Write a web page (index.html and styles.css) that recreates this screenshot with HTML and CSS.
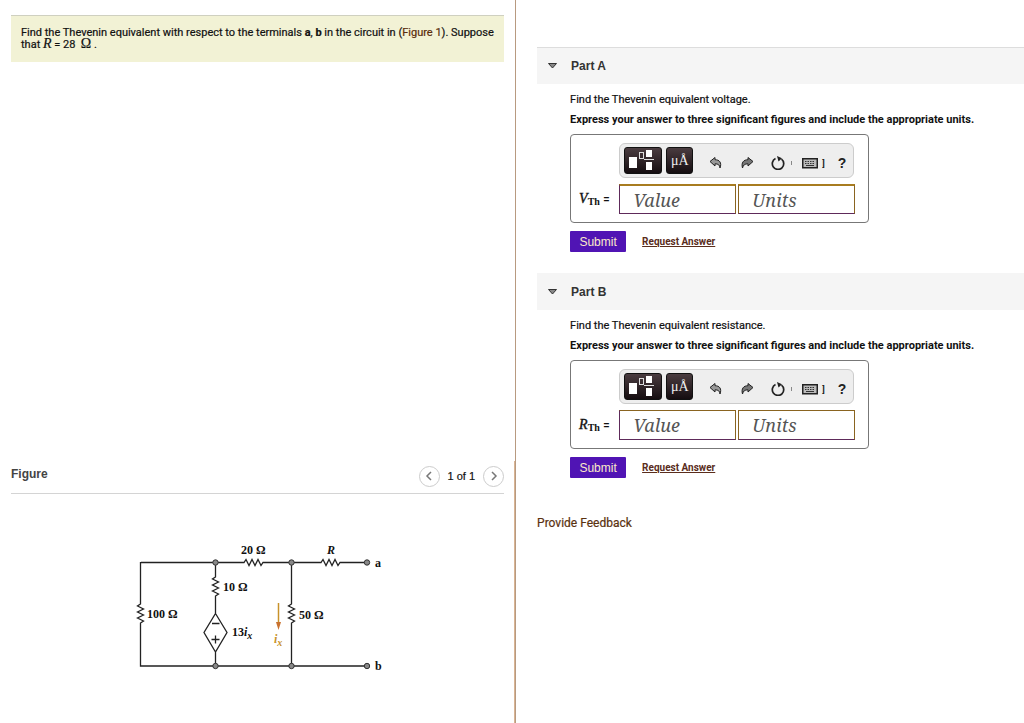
FILE: index.html
```html
<!DOCTYPE html>
<html lang="en">
<head>
    <meta charset="UTF-8">
    <meta name="viewport" content="width=device-width, initial-scale=1.0">
    <title>Thevenin Equivalent</title>
    <link rel="stylesheet" href="styles.css">
</head>
<body>
    <!-- shared toolbar icons -->
    <svg class="sprite" aria-hidden="true">
        <symbol id="icon-template" viewBox="0 0 38 27">
            <rect x="5" y="10" width="8" height="11" fill="#fff"/>
            <rect x="15.5" y="5.5" width="4" height="6" fill="none" stroke="#ddd"/>
            <rect x="22" y="3" width="6" height="7" fill="#fff"/>
            <path d="M20 12.5h10" stroke="#ddd"/>
            <rect x="22" y="15" width="6" height="8" fill="#fff"/>
        </symbol>
        <symbol id="icon-undo" viewBox="0 0 14 14">
            <path d="M1 5.500 6 1.500v2.200c4.500 0 7 3 5 8.300-.2-3-1.800-4.200-5-4.200V10z" fill="#999" stroke="#222"/>
        </symbol>
        <symbol id="icon-redo" viewBox="0 0 14 14">
            <path d="M13 5.500 8 1.500v2.200c-4.500 0-7 3-5.500 8.300.7-3 2.300-4.200 5.500-4.200V10z" fill="#777" stroke="#222"/>
        </symbol>
        <symbol id="icon-reset" viewBox="0 0 14 14">
            <path d="M4.500 2.600A5.700 5.700 0 1 0 10.500 3.200" fill="none" stroke="#222" stroke-width="1.700"/>
            <path d="M6 0l5 2.200L7.500 5.500z" fill="#222"/>
        </symbol>
        <symbol id="icon-keyboard" viewBox="0 0 16 11">
            <rect x=".75" y=".75" width="14.500" height="9" fill="#bbb" stroke="#222" stroke-width="1.500"/>
            <path d="M3 3.500h10M3 5.500h10" stroke="#333" stroke-dasharray="1.500 1"/>
            <path d="M4 7.500h8" stroke="#333"/>
        </symbol>
    </svg>

    <div class="page">
        <div class="left-pane">
            <div class="problem">
                Find the Thevenin equivalent with respect to the terminals <b>a</b>, <b>b</b> in the circuit in (<a href="#figure">Figure 1</a>). Suppose that <i class="math">R</i> = 28 &nbsp;<span class="math">Ω</span> .
            </div>

            <section class="figure" id="figure">
                <div class="figure-header">
                    <h2>Figure</h2>
                    <div class="pager">
                        <button type="button" aria-label="Previous">
                            <svg viewBox="0 0 10 10"><path d="M7 1 3 5l4 4"/></svg>
                        </button>
                        <span>1 of 1</span>
                        <button type="button" aria-label="Next">
                            <svg viewBox="0 0 10 10"><path d="M3 1l4 4-4 4"/></svg>
                        </button>
                    </div>
                </div>

                <svg class="circuit" viewBox="130 540 260 140">
                    <!-- wires and resistors -->
                    <g class="wire">
                        <path d="M141 562.500H244l2-3 3 6 3-6 3 6 3-6 3 6 2-3H321l2-3 3 6 3-6 3 6 3-6 3 6 2-3H365"/>
                        <path d="M140.500 562V604l-3 2 6 3-6 3 6 3-6 3 6 3-3 2V666H365"/>
                        <path d="M215.500 562V577l-3 2 6 3-6 3 6 3-6 3 6 3-3 2V613"/>
                        <path d="M215.500 613.500 227 632.500 215.500 652 204 632.500zM215.500 652V666M212 623.500h7.500M211.500 639.500h8M215.500 635.500v8"/>
                        <path d="M291.500 562V604l-3 2 6 3-6 3 6 3-6 3 6 3-3 2V666"/>
                    </g>
                    <g class="node">
                        <circle cx="215.500" cy="562.500" r="2.700"/>
                        <circle cx="291.500" cy="562.500" r="2.700"/>
                        <circle cx="367" cy="562.500" r="2.700"/>
                        <circle cx="215.500" cy="666" r="2.700"/>
                        <circle cx="291.500" cy="666" r="2.700"/>
                        <circle cx="367" cy="666" r="2.700"/>
                    </g>
                    <!-- current arrow -->
                    <path d="M278.500 603V623" stroke="#c8922a" stroke-width="1.500"/>
                    <path d="M276 622h5l-2.500 8z" fill="#c9722f"/>
                    <g class="label">
                        <text x="241" y="554">20 Ω</text>
                        <text x="327" y="554" font-style="italic">R</text>
                        <text x="375" y="567">a</text>
                        <text x="375" y="670">b</text>
                        <text x="223" y="591">10 Ω</text>
                        <text x="147" y="618">100 Ω</text>
                        <text x="299" y="619">50 Ω</text>
                        <text x="232" y="636">13<tspan font-style="italic">i</tspan><tspan class="sub" dy="3">x</tspan></text>
                        <text x="274" y="643" class="current">i<tspan class="sub" dy="3">x</tspan></text>
                    </g>
                </svg>
            </section>
        </div>

        <div class="right-pane">
            <section class="part">
                <h2 class="part-header"><svg viewBox="0 0 9 6"><path d="M.5.500h8l-4 4.500z"/></svg>Part A</h2>
                <div class="part-body">
                    <p>Find the Thevenin equivalent voltage.</p>
                    <p class="instructions">Express your answer to three significant figures and include the appropriate units.</p>
                    <form class="answer">
                        <div class="toolbar">
                            <button type="button" class="dark template" aria-label="Templates"><svg><use href="#icon-template"/></svg></button>
                            <button type="button" class="dark units">μÅ</button>
                            <button type="button" class="tool undo" aria-label="Undo"><svg><use href="#icon-undo"/></svg></button>
                            <button type="button" class="tool redo" aria-label="Redo"><svg><use href="#icon-redo"/></svg></button>
                            <button type="button" class="tool reset" aria-label="Reset"><svg><use href="#icon-reset"/></svg></button>
                            <span class="tick"></span>
                            <button type="button" class="tool keyboard" aria-label="Keyboard shortcuts"><svg><use href="#icon-keyboard"/></svg>]</button>
                            <button type="button" class="tool help">?</button>
                        </div>
                        <label for="value-a"><i>V</i><sub>Th</sub> <span>=</span></label>
                        <div class="fields">
                            <input type="text" id="value-a" placeholder="Value">
                            <input type="text" placeholder="Units" aria-label="Units">
                        </div>
                    </form>
                    <div class="actions">
                        <button type="button" class="submit">Submit</button>
                        <a href="#">Request Answer</a>
                    </div>
                </div>
            </section>

            <section class="part">
                <h2 class="part-header"><svg viewBox="0 0 9 6"><path d="M.5.500h8l-4 4.500z"/></svg>Part B</h2>
                <div class="part-body">
                    <p>Find the Thevenin equivalent resistance.</p>
                    <p class="instructions">Express your answer to three significant figures and include the appropriate units.</p>
                    <form class="answer">
                        <div class="toolbar">
                            <button type="button" class="dark template" aria-label="Templates"><svg><use href="#icon-template"/></svg></button>
                            <button type="button" class="dark units">μÅ</button>
                            <button type="button" class="tool undo" aria-label="Undo"><svg><use href="#icon-undo"/></svg></button>
                            <button type="button" class="tool redo" aria-label="Redo"><svg><use href="#icon-redo"/></svg></button>
                            <button type="button" class="tool reset" aria-label="Reset"><svg><use href="#icon-reset"/></svg></button>
                            <span class="tick"></span>
                            <button type="button" class="tool keyboard" aria-label="Keyboard shortcuts"><svg><use href="#icon-keyboard"/></svg>]</button>
                            <button type="button" class="tool help">?</button>
                        </div>
                        <label for="value-b"><i>R</i><sub>Th</sub> <span>=</span></label>
                        <div class="fields">
                            <input type="text" id="value-b" placeholder="Value">
                            <input type="text" placeholder="Units" aria-label="Units">
                        </div>
                    </form>
                    <div class="actions">
                        <button type="button" class="submit">Submit</button>
                        <a href="#">Request Answer</a>
                    </div>
                </div>
            </section>

            <a class="feedback" href="#">Provide Feedback</a>
        </div>
    </div>
</body>
</html>
```
FILE: styles.css
```css
* {
    box-sizing: border-box;
}

body {
    margin: 0;
    background: #fff;
    color: #111;
    font-family: Roboto, "Liberation Sans", Arial, sans-serif;
    font-size: 11px;
    line-height: 12px;
}

h2, p {
    margin: 0;
}

button {
    padding: 0;
    font-family: inherit;
    cursor: pointer;
}

.sprite {
    display: none;
}

.page {
    display: flex;
    min-height: 100vh;
}

/* left side: problem text and figure */
.left-pane {
    flex: 0 0 auto;
    width: 50.4%;
    display: flex;
    flex-direction: column;
    justify-content: space-between;
    padding: 15px 0 0 11px;
    border-right: 1px solid #b89a80;
}

.problem {
    margin-right: 11px;
    padding: 11px 10px;
    border-top: 1px solid #cfd0c0;
    background: #f2f2d5;
    -webkit-text-stroke: 0.2px;
}

.problem a {
    color: #5a2d0c;
    text-decoration: none;
}

.math {
    font-family: "Liberation Serif", "Times New Roman", serif;
    font-size: 14px;
    line-height: 10px;
}

.figure {
    min-height: 262px;
    padding-right: 10px;
    border-right: 1px solid #d9b493;
}

.figure-header {
    display: flex;
    align-items: center;
    justify-content: space-between;
    height: 33px;
    padding-bottom: 2px;
    border-bottom: 1px solid #d4d4d4;
}

.figure-header h2 {
    padding-bottom: 4px;
    color: #444;
    font-family: "Liberation Sans", Arial, sans-serif;
    font-size: 12px;
}

.pager {
    display: flex;
    align-items: center;
    gap: 8px;
    font-family: "Liberation Sans", Arial, sans-serif;
    -webkit-text-stroke: 0.2px;
}

.pager button {
    display: flex;
    align-items: center;
    justify-content: center;
    width: 21px;
    height: 21px;
    border: 1px solid #ccc;
    border-radius: 50%;
    background: #fff;
}

.pager svg {
    width: 10px;
    height: 10px;
    fill: none;
    stroke: #777;
    stroke-width: 1.5;
}

.circuit {
    display: block;
    width: 260px;
    height: 140px;
    margin: 46px 0 0 119px;
}

.wire {
    fill: none;
    stroke: #222;
    stroke-width: 1.3;
}

.node {
    fill: #888;
    stroke: #333;
}

.label {
    fill: #111;
    font-family: "Liberation Serif", "Times New Roman", serif;
    font-size: 12px;
    font-weight: bold;
}

.label .sub {
    font-size: 10px;
    font-style: italic;
}

.label .current {
    fill: #c8922a;
    font-style: italic;
}

/* right side: answer parts */
.right-pane {
    flex: 1;
    padding: 47px 0 0 21px;
}

.part {
    margin-bottom: 21px;
}

.part-header {
    display: flex;
    align-items: center;
    gap: 14px;
    height: 37px;
    padding: 0 11px;
    border-top: 1px solid #f5f5f5;
    background: #f5f5f5;
    color: #333;
    font-family: "Liberation Sans", Arial, sans-serif;
    font-size: 12px;
}

.part:first-child .part-header {
    border-top-color: #ddd;
}

.part-header svg {
    width: 9px;
    height: 6px;
    fill: #888;
    stroke: #333;
}

.part-body {
    padding: 10px 0 0 33px;
}

.part-body p {
    margin-bottom: 8px;
    -webkit-text-stroke: 0.2px;
}

.part-body .instructions {
    font-weight: bold;
    -webkit-text-stroke: 0;
}

.answer {
    display: inline-grid;
    grid-template-columns: auto auto;
    column-gap: 10px;
    row-gap: 6px;
    align-items: center;
    padding: 8px 13px 8px 8px;
    border: 1px solid #777;
    border-radius: 4px;
    vertical-align: top;
}

.toolbar {
    grid-column: 2;
    justify-self: start;
    display: flex;
    align-items: center;
    width: 235px;
    height: 35px;
    padding: 0 4px;
    border: 1px solid #ccc;
    border-radius: 6px;
    background: #eee;
}

.toolbar button {
    display: flex;
    align-items: center;
    justify-content: center;
    border: 0;
    background: none;
    color: #222;
}

.toolbar .dark {
    height: 27px;
    border: 1px solid #111;
    border-radius: 3px;
    background: linear-gradient(#4a3c40, #150d10);
}

.toolbar .template {
    width: 38px;
    margin-right: 4px;
}

.template svg {
    flex: none;
    width: 38px;
    height: 27px;
}

.toolbar .units {
    width: 27px;
    color: #eee;
    font-family: "Liberation Serif", "Times New Roman", serif;
    font-size: 14px;
}

.toolbar .tool {
    margin-top: 5px;
}

.tool svg {
    width: 14px;
    height: 14px;
}

.toolbar .undo {
    margin-left: 16px;
}

.toolbar .redo,
.toolbar .reset {
    margin-left: 17px;
}

.tick {
    width: 1px;
    height: 4px;
    margin: 5px 10px 0 6px;
    background: #888;
}

.toolbar .keyboard {
    gap: 4px;
    font-size: 9px;
    font-weight: bold;
}

.keyboard svg {
    width: 16px;
    height: 11px;
}

.toolbar .help {
    margin-left: 13px;
    font-family: "Liberation Sans", Arial, sans-serif;
    font-size: 14px;
    font-weight: bold;
}

.answer label {
    color: #111;
    font-family: "Liberation Serif", "Times New Roman", serif;
    font-size: 14px;
    font-weight: bold;
}

.answer label i {
    font-weight: normal;
    -webkit-text-stroke: 0.4px;
}

.answer sub {
    font-size: 10px;
    line-height: 0;
    vertical-align: -2px;
}

.answer label span {
    font-family: "Liberation Sans", Arial, sans-serif;
    font-size: 10px;
}

.fields {
    display: flex;
    gap: 2px;
}

.fields input {
    width: 117px;
    height: 30px;
    padding: 0 13px;
    border: 1px solid #8a6420;
    border-left-color: #5e2a5a;
    border-bottom-color: #5e2a5a;
    border-radius: 0;
    background: #fff;
    font-family: "Noto Serif", "Liberation Serif", "DejaVu Serif", serif;
    font-size: 18px;
    font-style: italic;
}

.fields input + input {
    border-left-color: #8a6420;
}

.part:first-child .fields input {
    border-top: 2px solid #a87c20;
}

.fields input::placeholder {
    color: #555;
    opacity: 1;
}

.actions {
    display: flex;
    align-items: center;
    gap: 16px;
    margin-top: 8px;
}

.submit {
    width: 56px;
    height: 21px;
    border: 0;
    border-radius: 1px;
    background: #5014b4;
    color: #fbe9c8;
    font-family: "Liberation Sans", Arial, sans-serif;
    font-size: 12px;
}

.actions a {
    color: #5a2d1c;
    font-size: 10px;
    font-weight: bold;
}

.feedback {
    display: inline-block;
    margin-top: 18px;
    color: #5a3210;
    font-size: 12px;
    text-decoration: none;
    -webkit-text-stroke: 0.2px;
}
```
